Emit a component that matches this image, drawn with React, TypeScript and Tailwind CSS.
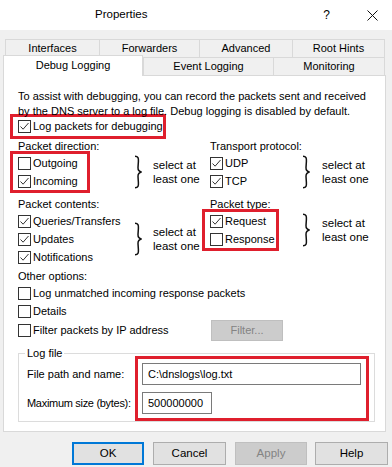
import React from "react";

const RED = "border-[#df1f2d]";

function Box({ on }: { on?: boolean }) {
  return (
    <span className="w-[13px] h-[13px] border border-[#333333] bg-white flex items-center justify-center shrink-0">
      {on && (
        <svg width="11" height="11" viewBox="0 0 11 11">
          <path d="M1.5 5.5l2.6 2.7 5.4-6.2" fill="none" stroke="#333333" strokeWidth="1" />
        </svg>
      )}
    </span>
  );
}

function Check({ on, label }: { on?: boolean; label: string }) {
  return (
    <div className="h-[18px] flex items-center gap-[2px] whitespace-nowrap">
      <Box on={on} />
      <span>{label}</span>
    </div>
  );
}

function Brace() {
  return (
    <svg width="10" height="34" viewBox="0 0 10 34" className="shrink-0">
      <path
        d="M2 1.2C5.2 1.2 5.6 3 5.4 6.5L5 12.5C4.9 15.6 6 16.6 8.6 17C6 17.4 4.9 18.4 5 21.5L5.4 27.5C5.6 31 5.2 32.8 2 32.8"
        fill="none"
        stroke="#111"
        strokeWidth="1.5"
      />
    </svg>
  );
}

function Select({ gap }: { gap: string }) {
  return (
    <div className={`leading-[14px] text-[11.5px] ${gap}`}>
      select at
      <br />
      least one
    </div>
  );
}

function Tab({ label, w, last }: { label: string; w: string; last?: boolean }) {
  return (
    <div
      className={`${w} h-[18px] bg-[#f0f0f0] border-t border-l ${last ? "border-r" : ""} border-[#d9d9d9] flex items-center justify-center`}
    >
      {label}
    </div>
  );
}

function Btn({ label, cls }: { label: string; cls: string }) {
  return (
    <div className={`h-[23px] flex items-center justify-center ${cls}`}>{label}</div>
  );
}

export default function App() {
  return (
    <div className="w-[392px] h-[467px] bg-[#f0f0f0] text-[11px] text-black font-['Liberation_Sans',Arial,sans-serif] overflow-hidden">
      {/* title bar */}
      <div className="h-[30px] bg-white flex items-center text-[11.5px]">
        <span className="ml-[95px]">Properties</span>
        <span className="ml-auto mr-[37px] text-[12px]">?</span>
        <svg width="11" height="11" viewBox="0 0 11 11" className="mr-[14px]">
          <path d="M0.5 0.5L10.5 10.5M10.5 0.5L0.5 10.5" stroke="#111" strokeWidth="1" />
        </svg>
      </div>

      {/* tabs */}
      <div className="pt-[9px]">
        <div className="flex ml-[5px]">
          <Tab label="Interfaces" w="w-[94px]" />
          <Tab label="Forwarders" w="w-[100px]" />
          <Tab label="Advanced" w="w-[93px]" />
          <Tab label="Root Hints" w="w-[93px]" last />
        </div>
        <div className="flex ml-[3px] h-[18px] items-start">
          <div className="w-[140px] h-[21px] -mt-[2px] bg-white border-t border-l border-r border-[#d9d9d9] relative z-10 flex items-center justify-center pb-[1px]">
            Debug Logging
          </div>
          <Tab label="Event Logging" w="w-[130px]" />
          <Tab label="Monitoring" w="w-[112px]" last />
        </div>
      </div>

      {/* panel */}
      <div className="ml-[3px] w-[383px] h-[357px] bg-white border border-[#d9d9d9] pl-[14px] pt-[13px]">
        <p className="leading-[15px] whitespace-nowrap">
          To assist with debugging, you can record the packets sent and received
          <br />
          by the DNS server to a log file. Debug logging is disabled by default.
        </p>

        <div className={`-ml-[8px] -mt-[5px] w-[156px] h-[25px] border-[3px] ${RED} pl-[5px] flex items-center`}>
          <Check on label="Log packets for debugging" />
        </div>

        <div className="grid grid-cols-[192px_1fr] leading-[15px]">
          {/* packet direction */}
          <div>
            <div className="h-[15px]">Packet direction:</div>
            <div className="flex items-center">
              <div className="w-[115px]">
                <div className={`-ml-[8px] -my-[3px] w-[80px] border-[3px] ${RED} pl-[5px] relative`}>
                  <Check label="Outgoing" />
                  <Check on label="Incoming" />
                </div>
              </div>
              <Brace />
              <Select gap="ml-[10px]" />
            </div>
          </div>
          {/* transport */}
          <div>
            <div className="h-[15px]">Transport protocol:</div>
            <div className="flex items-center">
              <div className="w-[91px]">
                <Check on label="UDP" />
                <Check on label="TCP" />
              </div>
              <Brace />
              <Select gap="ml-[11px]" />
            </div>
          </div>

          {/* packet contents */}
          <div className="mt-[7px]">
            <div className="h-[15px]">Packet contents:</div>
            <div className="flex items-center">
              <div className="w-[115px]">
                <Check on label="Queries/Transfers" />
                <Check on label="Updates" />
                <Check on label="Notifications" />
              </div>
              <Brace />
              <Select gap="ml-[10px]" />
            </div>
          </div>
          {/* packet type */}
          <div className="mt-[7px]">
            <div className="h-[15px]">Packet type:</div>
            <div className="flex items-center">
              <div className="w-[91px]">
                <div className={`-ml-[8px] -my-[3px] w-[77px] border-[3px] ${RED} pl-[5px] relative`}>
                  <Check on label="Request" />
                  <Check label="Response" />
                </div>
              </div>
              <Brace />
              <Select gap="ml-[11px]" />
            </div>
          </div>
        </div>

        <div className="mt-[3px] h-[15px] leading-[15px]">Other options:</div>
        <Check label="Log unmatched incoming response packets" />
        <Check label="Details" />
        <div className="grid grid-cols-[192px_1fr] h-[18px] items-center">
          <Check label="Filter packets by IP address" />
          <div className="ml-[1px] w-[72px] h-[21px] bg-[#cccccc] border border-[#bfbfbf] text-[#838383] flex items-center justify-center">
            Filter...
          </div>
        </div>

        <fieldset className="mt-[8px] w-[357px] border border-[#dcdcdc]">
          <legend className="ml-[6px] px-[2px] leading-[14px]">Log file</legend>
          <div className="flex -mt-[4px]">
            <div className="w-[116px] pl-[8px] pt-[7px] flex flex-col gap-[7px]">
              <div className="h-[22px] flex items-center">File path and name:</div>
              <div className="h-[22px] flex items-center whitespace-nowrap tracking-[-0.3px]">Maximum size (bytes):</div>
            </div>
            <div className={`w-[234px] border-[3px] ${RED} pt-[4px] pb-[4px] pl-[4px] pr-[5px] flex flex-col gap-[7px]`}>
              <div className="w-[219px] h-[22px] border border-[#7a7a7a] pl-[5px] flex items-center">
                C:\dnslogs\log.txt
              </div>
              <div className="w-[70px] h-[22px] border border-[#7a7a7a] pl-[5px] flex items-center">
                500000000
              </div>
            </div>
          </div>
        </fieldset>
      </div>

      {/* buttons */}
      <div className="flex pt-[10px] text-[11.5px]">
        <Btn label="OK" cls="ml-[72px] w-[72px] bg-[#e1e1e1] border-2 border-[#0078d7]" />
        <Btn label="Cancel" cls="ml-[9px] w-[73px] bg-[#e1e1e1] border border-[#adadad]" />
        <Btn label="Apply" cls="ml-[9px] w-[72px] bg-[#cccccc] border border-[#bfbfbf] text-[#838383]" />
        <Btn label="Help" cls="ml-[8px] w-[73px] bg-[#e1e1e1] border border-[#adadad]" />
      </div>
    </div>
  );
}
